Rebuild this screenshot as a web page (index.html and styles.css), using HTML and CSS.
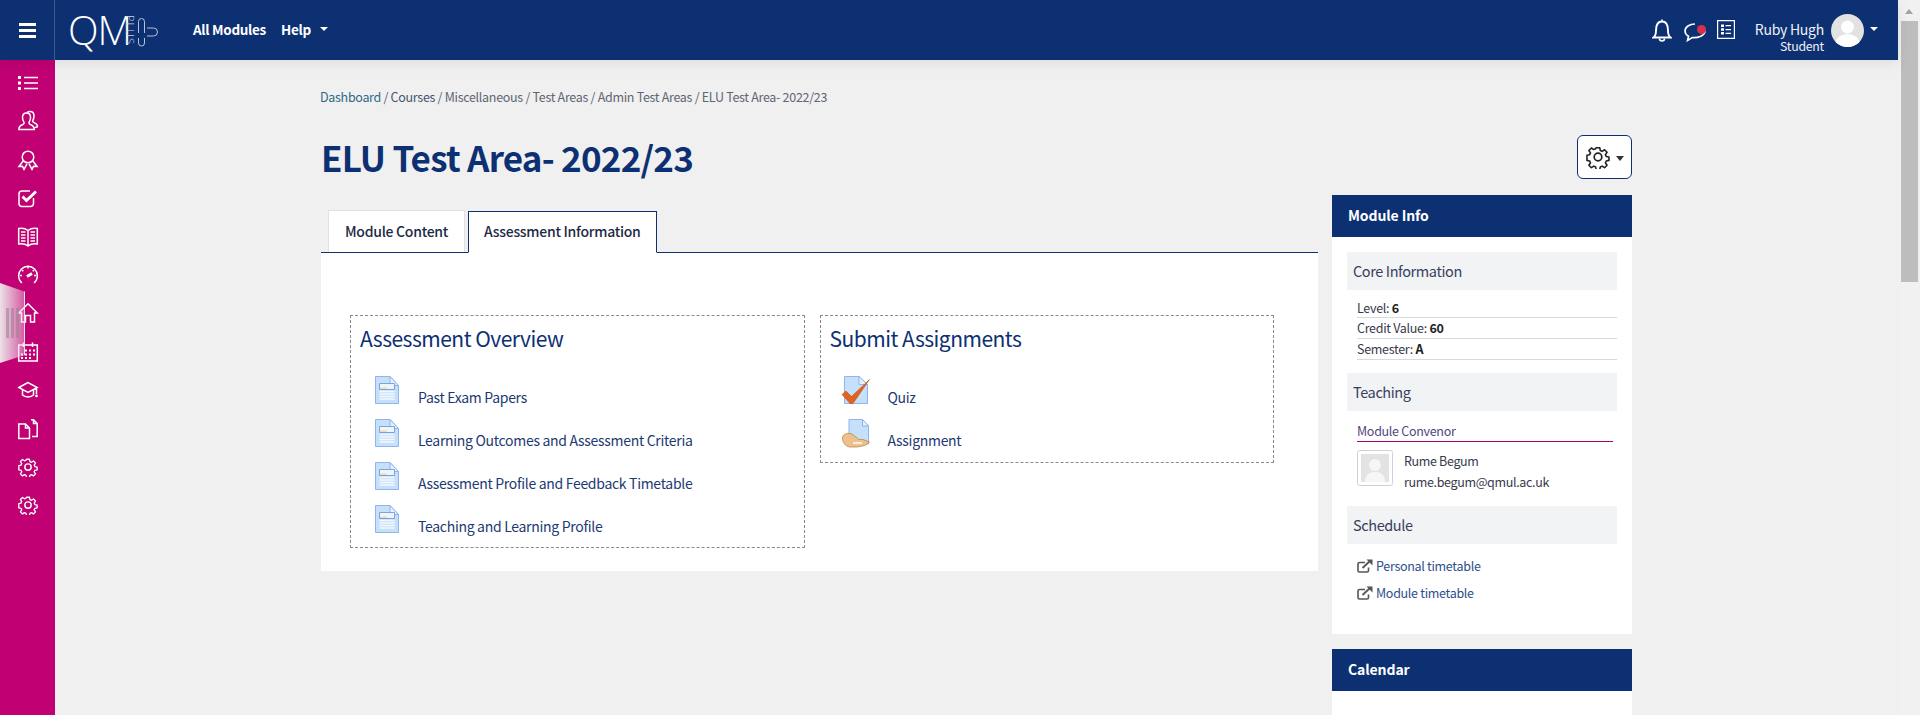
FILE: index.html
```html
<!DOCTYPE html>
<html lang="en">
<head>
<meta charset="utf-8">
<title>ELU Test Area- 2022/23</title>
<link rel="stylesheet" href="styles.css">
</head>
<body>
<svg class="defs" width="0" height="0" aria-hidden="true">
  <defs>
    <symbol id="doc" viewBox="0 0 24 28">
      <path d="M.5.5H15L23.5 9.500V27.500H.5Z" fill="#c5e0f8" stroke="#8fb4ee"/>
      <path d="M15 .5V9.500H23.500Z" fill="#e6f0fc" stroke="#8fb4ee"/>
      <path d="M4.500 7.500H19.500V13.500H4.500Z" fill="#eef6fd" stroke="#7da3dc"/>
      <path d="M5 11.500H12V13H5Z" fill="#f6d9a6"/>
      <path d="M4.500 15.500H19.500M4.500 18H19.500M4.500 20.500H19.500M4.500 23H19.500" stroke="#f2f8fe" stroke-width="1.300"/>
    </symbol>
    <symbol id="cog" viewBox="0 0 24 24">
      <path fill="none" stroke="currentColor" stroke-width="1.800" stroke-linejoin="round" d="M10 1.500h4l.7 3.200 2 .9 2.800-1.800 2.800 2.800-1.800 2.800.9 2 3.100.7v3.800l-3.100.7-.9 2 1.800 2.800-2.800 2.800-2.800-1.800-2 .9-.7 3.200h-4l-.7-3.200-2-.9-2.800 1.800-2.800-2.800 1.800-2.800-.9-2-3.100-.7V10.100l3.100-.7.9-2-1.800-2.800 2.800-2.800 2.800 1.800 2-.9Z" transform="translate(1.400 1.400) scale(.88)"/>
      <circle cx="12" cy="12" r="3.800" fill="none" stroke="currentColor" stroke-width="1.700"/>
    </symbol>
    <symbol id="ext" viewBox="0 0 16 14">
      <path fill="none" stroke="#555" stroke-width="1.600" d="M11.500 8.500V11.500a1.500 1.500 0 0 1-1.500 1.500H2.500A1.500 1.500 0 0 1 1 11.500V5A1.500 1.500 0 0 1 2.500 3.500H8"/>
      <path fill="none" stroke="#555" stroke-width="1.800" d="M5.500 9 13 2"/>
      <path fill="#555" d="M9.500 .5H15.500V6.500Z"/>
    </symbol>
  </defs>
</svg>

<div class="window">
  <div class="page">
    <header class="topbar">
      <button class="burger" aria-label="Menu"><span></span><span></span><span></span></button>
      <a class="logo" href="#">
        <span class="logo-qm">QM</span><span class="logo-plus">PLUS</span>
        <svg class="logo-cross" viewBox="0 0 21 33" width="21" height="33"><path fill="none" stroke="#c9d2e4" stroke-width=".9" d="M1.500 18V6.500a3 3 0 0 1 6 0V18M10 13H16.500a4 4 0 0 1 0 8H10M1.500 23V28a3 3 0 0 0 6 0V23"/></svg>
      </a>
      <nav class="topnav">
        <a href="#">All Modules</a>
        <a href="#" class="help">Help <i class="caret"></i></a>
      </nav>
      <div class="top-right">
        <svg class="ic-bell" viewBox="0 0 20 24" width="20" height="24"><path fill="none" stroke="#fff" stroke-width="1.900" d="M1.500 18.500c2-1.500 2.500-3.500 2.500-7C4 6 6 2.500 10 2.500s6 3.500 6 9c0 3.500.5 5.500 2.500 7Z"/><path fill="none" stroke="#fff" stroke-width="1.600" d="M7.500 19.500a2.500 2.500 0 0 0 5 0"/><path stroke="#fff" stroke-width="1.600" d="M10 .5V2.500"/></svg>
        <span class="chat">
          <svg viewBox="0 0 22 20" width="22" height="20"><path fill="none" stroke="#fff" stroke-width="1.600" d="M11 2C5.500 2 1 5 1 9c0 2.300 1.300 4 3.500 5.300L3.500 18.500l4.800-3c5.700.6 12.700-2 12.700-6.500"/></svg>
          <i class="dot"></i>
        </span>
        <svg class="ic-list" viewBox="0 0 18 19" width="18" height="19"><path fill="none" stroke="#fff" stroke-width="1.200" d="M.6.600H17.400V18.400H.6Z"/><path fill="#fff" d="M4 4.500H7V7H4ZM8.500 5H14V6.300H8.500ZM4 8.300H7V10.800H4ZM8.500 9H14V10.300H8.500ZM4 12H7V14.500H4ZM8.500 12.700H14V14H8.500Z"/></svg>
        <div class="user-text"><span class="user-name">Ruby Hugh</span><span class="user-role">Student</span></div>
        <svg class="avatar" viewBox="0 0 33 33" width="33" height="33"><defs><clipPath id="av"><circle cx="16.500" cy="16.500" r="16.500"/></clipPath></defs><g clip-path="url(#av)"><rect width="33" height="33" fill="#e2e2e2"/><circle cx="16.500" cy="13" r="6.500" fill="#fff"/><ellipse cx="16.500" cy="29" rx="12" ry="9" fill="#fff"/></g></svg>
        <i class="caret user-caret"></i>
      </div>
    </header>

    <div class="body-row">
      <aside class="rail">
        <svg viewBox="0 0 20 20"><path class="s" d="M6 4.500H20M6 10H20M6 15.500H20"/><path class="f" d="M0 3H3V6H0ZM0 8.500H3V11.500H0ZM0 14H3V17H0Z"/></svg>
        <svg viewBox="0 0 20 20"><path class="s" d="M.8 18.500c0-3 1.300-4 4-5 1-.4 1.500-1 1.300-2C5 10 4.500 8.500 4.500 6.500 4.500 3.500 6.500 2 8.500 2s4 1.500 4 4.500c0 2-.5 3.500-1.500 5-.2 1 .3 1.600 1.300 2 2.700 1 4 2 4 5Z"/><path class="s" d="M9 1.500C10 .8 11 .6 12 .6c2.500 0 4 1.700 4 4.400 0 2-.5 3.500-1.300 4.700-.2 1 .3 1.500 1.300 1.900 2 .8 3.300 1.700 3.500 3.400 0 1-1 1.500-2.700 1.500"/></svg>
        <svg viewBox="0 0 20 20"><circle class="s" cx="10" cy="7" r="5.800"/><path class="s" d="M5.500 10.500 1 16.500l3.500-.2 1.500 3 3-5.500M14.500 10.500l4.500 6-3.500-.2-1.500 3-3-5.500"/></svg>
        <svg viewBox="0 0 20 20"><path class="s" d="M15.500 10v5.500a3 3 0 0 1-3 3H4a3 3 0 0 1-3-3V6a3 3 0 0 1 3-3h8"/><path class="s thick" d="M4.500 8.500 8.500 12.500 18 3.500"/></svg>
        <svg viewBox="0 0 20 20"><path class="s" d="M10 3.500C7.500 1.500 4 1 .7 1.500V17c3.300-.5 6.800 0 9.300 2 2.500-2 6-2.500 9.300-2V1.500C16 1 12.500 1.500 10 3.500ZM10 3.500V19M3 5H7.500M3 8H7.500M3 11H7.500M3 14H7.500M12.500 5H17M12.500 8H17M12.500 11H17M12.500 14H17"/></svg>
        <svg viewBox="0 0 20 20"><path class="s" d="M4 18C1.800 16.300.7 13.500.7 10.500a9.300 9.300 0 0 1 18.600 0c0 3-1.100 5.800-3.300 7.500"/><path class="s" d="M10 1.500V3.500M2 10.500H4M16 10.500H18M4 5 5.300 6.300M16 5 14.700 6.300"/><path class="s thick" d="M9 11.500 14 8.500"/></svg>
        <svg viewBox="0 0 20 20"><path class="s" d="M.8 10 10 .8 19.200 10 16.500 10V19H12.500V12.500H7.500V19H3.500V10Z"/></svg>
        <svg viewBox="0 0 20 20"><path class="s" d="M.7 3H19.300V19H.7ZM5.500 .5V5M14.500 .5V5"/><path class="f" d="M7 7.500H9V9.500H7ZM11 7.500H13V9.500H11ZM15 7.500H17V9.500H15ZM3 11.500H5V13.500H3ZM7 11.500H9V13.500H7ZM11 11.500H13V13.500H11ZM15 11.500H17V13.500H15ZM3 15H5V17H3ZM7 15H9V17H7ZM11 15H13V17H11Z"/></svg>
        <svg viewBox="0 0 20 20"><path class="s" d="M10 2.500 .8 7.500 10 12.500 19.200 7.500ZM4.500 10V15C7 17.500 13 17.500 15.500 15V10M18.500 8V14.500"/><circle class="f" cx="18.500" cy="16" r="1.300"/></svg>
        <svg viewBox="0 0 20 20"><path class="s" d="M.8 5H7.500L11.500 9V19.500H.8ZM7.500 5V9H11.500"/><path class="s" d="M13 .8H15.500L19.200 4.500V17.500H14M15.500 .8V4.500H19.200"/></svg>
        <svg class="cog" viewBox="0 0 20 20"><use href="#cog"/></svg>
        <svg class="cog" viewBox="0 0 20 20"><use href="#cog"/></svg>
      </aside>

      <main class="main">
        <nav class="crumbs">
          <a class="teal" href="#">Dashboard</a> / <a href="#">Courses</a> / <a class="muted" href="#">Miscellaneous</a> / <a class="muted" href="#">Test Areas</a> / <a class="muted" href="#">Admin Test Areas</a> / <a class="muted" href="#">ELU Test Area- 2022/23</a>
        </nav>
        <div class="title-row">
          <h1>ELU Test Area- 2022/23</h1>
          <button class="gear" aria-label="Actions">
            <svg class="gear-ic" viewBox="0 0 24 24" width="24" height="24"><use href="#cog"/></svg>
            <i class="caret dark"></i>
          </button>
        </div>
        <div class="columns">
          <section class="content">
            <div class="tabs">
              <a class="tab" href="#">Module Content</a>
              <a class="tab active" href="#">Assessment Information</a>
            </div>
            <div class="panel">
              <div class="box">
                <h2>Assessment Overview</h2>
                <ul class="items">
                  <li><svg class="res" width="24" height="28"><use href="#doc"/></svg><a href="#">Past Exam Papers</a></li>
                  <li><svg class="res" width="24" height="28"><use href="#doc"/></svg><a href="#">Learning Outcomes and Assessment Criteria</a></li>
                  <li><svg class="res" width="24" height="28"><use href="#doc"/></svg><a href="#">Assessment Profile and Feedback Timetable</a></li>
                  <li><svg class="res" width="24" height="28"><use href="#doc"/></svg><a href="#">Teaching and Learning Profile</a></li>
                </ul>
              </div>
              <div class="box">
                <h2>Submit Assignments</h2>
                <ul class="items">
                  <li>
                    <svg class="res wide" viewBox="0 0 28 30" width="28" height="30"><path d="M2.500 .5H17L25.500 8.500V27.500H2.500Z" fill="#c5e0f8" stroke="#8fb4ee"/><path d="M17 .5V8.500H25.500Z" fill="#e6f0fc" stroke="#8fb4ee"/><path d="M0 18.500 4 15 9.500 20.500 27.500 3.500 11 27.500H8Z" fill="#e0641c" stroke="#c4521a" stroke-width=".6"/></svg>
                    <a href="#">Quiz</a>
                  </li>
                  <li>
                    <svg class="res wide" viewBox="0 0 28 30" width="28" height="30"><path d="M7 .5H20.500L26.500 7V25H7Z" fill="#c5e0f8" stroke="#8fb4ee"/><path d="M20.500 .5V7H26.500Z" fill="#e6f0fc" stroke="#8fb4ee"/><path d="M.5 18C2 14.500 6 13.500 10 15L17 20.500H21L27.500 23 23 26.500 15 28H8C4 28 0 23 .5 18Z" fill="#eec08b" stroke="#b98a52" stroke-width=".8"/><path d="M11 24H20" stroke="#fff" stroke-width="1.400"/></svg>
                    <a href="#">Assignment</a>
                  </li>
                </ul>
              </div>
            </div>
          </section>

          <aside class="side">
            <div class="card">
              <h3 class="card-head">Module Info</h3>
              <div class="card-body">
                <h4>Core Information</h4>
                <ul class="facts">
                  <li>Level: <b>6</b></li>
                  <li>Credit Value: <b>60</b></li>
                  <li>Semester: <b>A</b></li>
                </ul>
                <h4>Teaching</h4>
                <div class="convenor">Module Convenor</div>
                <div class="person">
                  <svg class="thumb" viewBox="0 0 36 36" width="36" height="36"><rect x=".5" y=".5" width="35" height="35" rx="2" fill="#fff" stroke="#cfcfe0"/><rect x="4" y="4" width="28" height="28" fill="#e3e3e3"/><circle cx="18" cy="15" r="6" fill="#f6f6f6"/><path d="M8 32C8 25 12 22 18 22S28 25 28 32Z" fill="#f6f6f6"/></svg>
                  <div class="person-text"><span>Rume Begum</span><span>rume.begum@qmul.ac.uk</span></div>
                </div>
                <h4>Schedule</h4>
                <ul class="links">
                  <li><svg width="16" height="14"><use href="#ext"/></svg><a href="#">Personal timetable</a></li>
                  <li><svg width="16" height="14"><use href="#ext"/></svg><a href="#">Module timetable</a></li>
                </ul>
              </div>
            </div>
            <div class="card">
              <h3 class="card-head">Calendar</h3>
              <div class="card-rest"></div>
            </div>
          </aside>
        </div>
      </main>
    </div>
  </div>

  <div class="scrollbar">
    <i class="scroll-up"></i>
    <div class="thumb-bar"></div>
  </div>
</div>

<div class="handle"><i></i><i></i><i></i></div>
</body>
</html>
```

FILE: styles.css
```css
* { box-sizing: border-box; }
html, body { margin: 0; height: 100%; overflow: hidden; }
body {
  background: #f0f0f0;
  font-family: "Noto Sans CJK SC", "Noto Sans", sans-serif;
  font-size: 14px;
  color: #373a4c;
}
a { color: inherit; text-decoration: none; }
ul { list-style: none; margin: 0; padding: 0; }
h1, h2, h3, h4 { margin: 0; }
.defs { position: absolute; }

.window { display: flex; height: 715px; }
.page { width: 1898px; flex: none; display: flex; flex-direction: column; }

/* top bar */
.topbar {
  height: 60px; flex: none;
  display: flex; align-items: center;
  background: #0d3073; color: #fff;
  box-shadow: 0 3px 12px rgba(0,0,0,.08);
  position: relative; z-index: 2;
}
.burger {
  width: 55px; height: 60px; flex: none;
  border: 0; border-right: 1px solid #3d5b92; background: none;
  display: flex; flex-direction: column; justify-content: center; align-items: center; gap: 3px;
  padding: 0;
}
.burger span { width: 17px; height: 3px; background: #fff; }
.logo { display: flex; align-items: center; width: 103px; margin-left: 13px; height: 60px; }
.logo-qm { font-family: "Open Sans", sans-serif; font-weight: 300; font-size: 40px; line-height: 60px; letter-spacing: -1px; width: 57px; color: #fff; flex: none; }
.logo-plus {
  writing-mode: vertical-rl; font-family: "Open Sans", sans-serif; font-weight: 300;
  font-size: 11px; line-height: 10px; letter-spacing: 1px; color: #c9d2e4; margin-top: -1px; flex: none;
}
.logo-cross { margin-left: 2px; margin-top: 2px; flex: none; }
.topnav { display: flex; gap: 15px; margin-left: 22px; font-weight: 700; font-size: 13.500px; letter-spacing: -.3px; line-height: 60px; margin-top: -3px; }
.help { display: flex; align-items: center; gap: 5px; }
.caret { display: inline-block; border: 4px solid transparent; border-top: 4.500px solid #fff; border-bottom: 0; width: 0; height: 0; }
.help .caret { margin-left: 4px; margin-top: 1px; }
.caret.dark { border: 4.500px solid transparent; border-top: 5px solid #333; border-bottom: 0; margin-top: 3px; }

.top-right { margin-left: auto; display: flex; align-items: center; padding-right: 20px; }
.ic-bell { margin-top: 2px; }
.chat { position: relative; display: block; margin-left: 12px; width: 22px; height: 20px; margin-top: 3px; }
.chat svg { display: block; }
.dot { position: absolute; right: 0; top: 3px; width: 9px; height: 9px; border-radius: 50%; background: #d9304a; }
.ic-list { margin-left: 11px; margin-top: -1px; }
.user-text { display: flex; flex-direction: column; align-items: flex-end; margin-left: 20px; margin-top: 14px; color: #eef1f7; white-space: nowrap; }
.user-name { font-size: 14px; line-height: 17px; letter-spacing: -.25px; }
.user-role { font-size: 12.300px; line-height: 16px; letter-spacing: -.25px; }
.avatar { margin-left: 7px; flex: none; }
.user-caret { margin-left: 6px; margin-top: -2px; }

/* rail + main */
.body-row { flex: 1; display: flex; min-height: 0; }
.rail {
  width: 55px; flex: none; background: #c00073; color: #fff;
  display: flex; flex-direction: column; align-items: center; gap: 18.400px;
  padding-top: 13px;
}
.rail svg { width: 20px; height: 20px; flex: none; overflow: visible; }
.rail .s { fill: none; stroke: #fff; stroke-width: 1.500; }
.rail .thick { stroke-width: 2.800; }
.rail .f { fill: #fff; }
.main { flex: none; width: 1311px; margin-left: 266px; }

.crumbs { font-size: 12.500px; letter-spacing: -.3px; line-height: 18px; margin-top: 28px; color: #5f6672; white-space: nowrap; margin-left: -1px; }
.crumbs .teal { color: #2f6a86; }
.crumbs a { color: #40566e; }
.crumbs .muted { color: #5f6672; }
.title-row { display: flex; justify-content: space-between; align-items: flex-start; margin-top: 29px; }
h1 { font-size: 35px; letter-spacing: -.78px; line-height: 43px; font-weight: 700; color: #0d3073; }
.gear {
  width: 55px; height: 44px; background: #fff; padding: 0;
  border: 1px solid #0d3073; border-radius: 6px;
  display: flex; align-items: center; justify-content: center; gap: 6px;
}
.gear-ic { color: #222; display: block; }

.columns { display: flex; gap: 14px; margin-top: 16px; align-items: flex-start; }
.content { width: 997px; flex: none; }
.tabs { display: flex; gap: 3px; padding-left: 7px; height: 58px; align-items: flex-end; border-bottom: 1px solid #0d3073; position: relative; }
.tab {
  height: 42px; line-height: 40px; padding: 0 16px;
  background: #fff; border: 1px solid #dee2e6; border-bottom: 0;
  font-weight: 500; font-size: 14px; letter-spacing: -.27px; color: #1d2a44;
}
.tab.active { padding: 0 15px; line-height: 38px; border: 1px solid #0d3073; border-bottom: 1px solid #fff; margin-bottom: -1px; }
.panel { background: #fff; display: flex; align-items: flex-start; gap: 15px; padding: 62px 44px 23px 29px; }
.box { width: 455px; border: 1px dashed #8a8a8a; padding: 8px 9px 0; }
.box h2 { font-size: 21px; letter-spacing: -.5px; line-height: 28px; font-weight: 400; color: #0d3073; }
.items { padding: 24px 0 0 15px; }
.items li { display: flex; align-items: flex-start; height: 43px; color: #1c3a72; }
.box:first-child .items li:last-child { height: 42px; }
.res { flex: none; margin-right: 19px; display: block; overflow: visible; }
.res.wide { margin: 0 18px 0 -3px; }
.items a { font-size: 14px; letter-spacing: -.3px; line-height: 20px; margin-top: 11px; }

/* side */
.side { width: 300px; flex: none; display: flex; flex-direction: column; gap: 15px; }
.card { background: #fff; }
.card-head { height: 42px; background: #0d3073; color: #fff; font-size: 14px; letter-spacing: -.1px; font-weight: 700; line-height: 41px; padding-left: 16px; }
.card-body { padding: 15px 15px 28px; }
.card-body h4 {
  height: 38px; line-height: 37px; padding-left: 6px;
  background: #f2f3f5; font-size: 14.500px; letter-spacing: -.4px; font-weight: 400; color: #37405e;
}
.facts { padding: 8px 0 0 10px; margin-bottom: 13px; font-size: 12.500px; letter-spacing: -.3px; color: #373a4c; }
.facts li { height: 21px; line-height: 20px; border-bottom: 1px solid #d7dadd; }
.facts li:first-child { height: 20px; }
.facts b { font-weight: 700; color: #222; }
.convenor { margin: 11px 4px 0 10px; height: 20px; line-height: 18px; border-bottom: 1px solid #a8006e; font-size: 12.500px; letter-spacing: -.3px; color: #53457c; }
.person { display: flex; margin: 8px 0 14px 10px; gap: 11px; }
.thumb { display: block; }
.person-text { display: flex; flex-direction: column; font-size: 12.500px; letter-spacing: -.35px; line-height: 21px; color: #373a4c; }
.links { padding: 8px 0 0 10px; font-size: 12.500px; letter-spacing: -.3px; color: #2d4f8a; }
.links li { display: flex; align-items: center; gap: 3px; height: 27px; }
.card-rest { height: 24px; }

/* scrollbar */
.scrollbar { width: 18px; margin-left: 2px; flex: none; background: #f1f1f1; display: flex; flex-direction: column; align-items: center; }
.scroll-up { margin-top: 9px; width: 0; height: 0; border: 4.500px solid transparent; border-bottom: 5px solid #a3a3a3; border-top: 0; }
.thumb-bar { width: 17px; height: 261px; background: #bdbdbd; margin-top: 7px; }

/* floating handle */
.handle {
  position: absolute; left: 0; top: 283px; width: 25px; height: 80px;
  background: linear-gradient(90deg, rgba(238,238,238,.95), rgba(238,205,225,.45));
  border-right: 1px solid rgba(230,230,230,.7);
  clip-path: polygon(0 0, 100% 11%, 100% 90%, 0 100%);
  display: flex; gap: 2px; padding: 25px 0 0 6px;
}
.handle i { width: 3px; height: 30px; background: rgba(150,130,140,.55); }
```
